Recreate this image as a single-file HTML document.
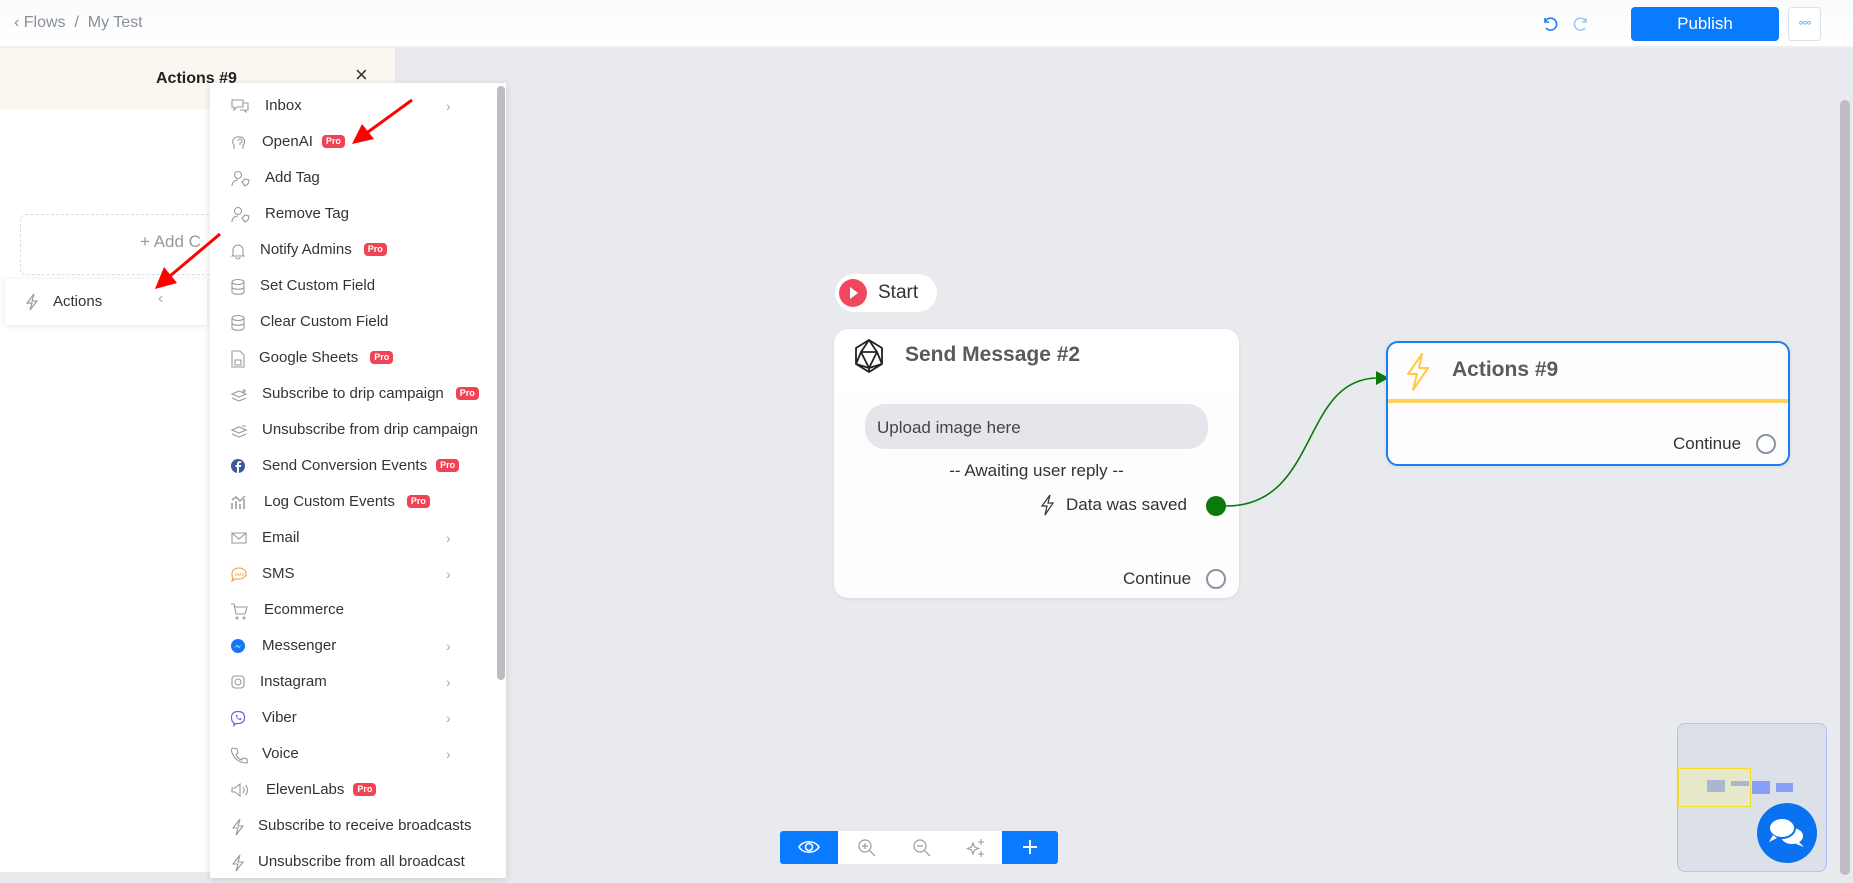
<!DOCTYPE html>
<html><head><meta charset="utf-8"><style>
*{box-sizing:border-box;margin:0;padding:0}
body{width:1853px;height:883px;overflow:hidden;background:#e9eaee;font-family:"Liberation Sans",Arial,sans-serif;position:relative;color:#333}
.abs{position:absolute}
.top{left:0;top:0;width:1853px;height:48px;background:linear-gradient(#fafbfc,#fff);border-bottom:2px solid #eceef2}
.crumb{left:14px;top:14px;font-size:16px;color:#8a8f99}
.pub{left:1631px;top:7px;width:148px;height:34px;background:#0a7bff;border-radius:4px;color:#fff;font-size:17px;text-align:center;line-height:34px}
.dots{left:1788px;top:7px;width:33px;height:34px;border:1px solid #dde0e6;border-radius:4px;background:#fff;color:#1a7ff0;text-align:center;line-height:28px;font-size:14px;letter-spacing:-1px}
.left{left:0;top:48px;width:395px;height:824px;background:#fff}
.lhead{left:0;top:48px;width:395px;height:62px;background:#faf6f0}
.menu{left:210px;top:83px;width:296px;height:795px;background:#fff;box-shadow:0 2px 8px rgba(0,0,0,.12)}
.item{position:absolute;left:0;width:296px;height:36px;font-size:15px;color:#333;line-height:36px}
.item svg{position:absolute;left:20px;top:10px}
.item span.t{position:absolute;left:52px}
.pro{display:inline-block;background:#f04455;color:#fff;font-size:9px;font-weight:bold;border-radius:4px;padding:0 4px;line-height:13px;height:13px;vertical-align:middle;margin-left:9px;position:relative;top:-1px}
.chev{position:absolute;left:236px;top:0;color:#aaa;font-size:14px}
.node{background:#fdfdfd;border-radius:14px;box-shadow:0 1px 4px rgba(0,0,0,.08)}
.circ{width:20px;height:20px;border:2px solid #8a94a6;border-radius:50%;background:#fff}
</style></head><body>
<div class="abs top"></div>
<div class="abs crumb">&#8249;&nbsp;Flows &nbsp;/&nbsp; My Test</div>
<svg class="abs" style="left:1540px;top:13px" width="20" height="20" viewBox="0 0 20 20"><path d="M5 5 L5 9 L9 9 M5 9 A6 6 0 1 1 6 15" fill="none" stroke="#1a7ff0" stroke-width="1.6"/></svg>
<svg class="abs" style="left:1571px;top:13px" width="20" height="20" viewBox="0 0 20 20"><path d="M15 5 L15 9 L11 9 M15 9 A6 6 0 1 0 14 15" fill="none" stroke="#9fc8f5" stroke-width="1.6"/></svg>
<div class="abs pub">Publish</div>
<div class="abs dots">&#9702;&#9702;&#9702;</div>

<div class="abs left"></div>
<div class="abs lhead"></div>
<div class="abs" style="left:156px;top:70px;font-size:16px;font-weight:bold;color:#222">Actions #9</div>
<div class="abs" style="left:355px;top:64px;font-size:22px;color:#333;line-height:22px">&#215;</div>
<div class="abs" style="left:20px;top:214px;width:200px;height:61px;border:1px dashed #cfe0f0;border-radius:6px"></div>
<div class="abs" style="left:140px;top:232px;font-size:17px;color:#999">+ Add C</div>
<div class="abs" style="left:5px;top:279px;width:202px;height:46px;background:#fff;box-shadow:0 1px 6px rgba(0,0,0,.1)"></div>
<svg class="abs" style="left:24px;top:293px" width="16" height="18" viewBox="0 0 16 18"><path d="M10 1 L3 10 L8 10 L6 17 L13 8 L8 8 Z" fill="none" stroke="#999" stroke-width="1.2"/></svg>
<div class="abs" style="left:53px;top:293px;font-size:15px;color:#333">Actions</div>
<div class="abs" style="left:158px;top:290px;font-size:16px;color:#aaa">&#8249;</div>

<div class="abs menu">
<div class="abs" style="left:287px;top:3px;width:8px;height:594px;background:#bdbdc2;border-radius:4px"></div>
</div>
<div class="abs" style="left:210px;top:88px;width:290px;height:790px">
<div class="item" style="top:0"><svg width="20" height="16"><path d="M2 2h11v7H7l-3 3V9H2z M13 5h5v7h-2v2l-2-2h-4" fill="none" stroke="#999" stroke-width="1.1"/></svg><span class="t" style="left:55px">Inbox</span><span class="chev">&#8250;</span></div>
<div class="item" style="top:36px"><svg width="18" height="18"><path d="M4 15V11C2 9 2 4 7 3s9 2 7 7l-1 1v4M8 7a2 2 0 1 1 2 2v2" fill="none" stroke="#999" stroke-width="1.1"/></svg><span class="t">OpenAI<span class="pro">Pro</span></span></div>
<div class="item" style="top:72px"><svg width="20" height="18"><circle cx="8" cy="5" r="3.5" fill="none" stroke="#999" stroke-width="1.1"/><path d="M2 16c0-4 3-6 6-6M12 12l3-3 4 1-1 4-3 2z" fill="none" stroke="#999" stroke-width="1.1"/></svg><span class="t" style="left:55px">Add Tag</span></div>
<div class="item" style="top:108px"><svg width="20" height="18"><circle cx="8" cy="5" r="3.5" fill="none" stroke="#999" stroke-width="1.1"/><path d="M2 16c0-4 3-6 6-6M12 12l3-3 4 1-1 4-3 2z" fill="none" stroke="#999" stroke-width="1.1"/></svg><span class="t" style="left:55px">Remove Tag</span></div>
<div class="item" style="top:144px"><svg width="16" height="18"><path d="M3 13V8a5 5 0 0 1 10 0v5l1 1H2z M6 15a2 2 0 0 0 4 0" fill="none" stroke="#999" stroke-width="1.1"/></svg><span class="t" style="left:50px">Notify Admins<span class="pro" style="margin-left:12px">Pro</span></span></div>
<div class="item" style="top:180px"><svg width="16" height="18"><ellipse cx="8" cy="4" rx="6" ry="2.5" fill="none" stroke="#999" stroke-width="1.1"/><path d="M2 4v10c0 3 12 3 12 0V4M2 9c0 3 12 3 12 0" fill="none" stroke="#999" stroke-width="1.1"/></svg><span class="t" style="left:50px">Set Custom Field</span></div>
<div class="item" style="top:216px"><svg width="16" height="18"><ellipse cx="8" cy="4" rx="6" ry="2.5" fill="none" stroke="#999" stroke-width="1.1"/><path d="M2 4v10c0 3 12 3 12 0V4M2 9c0 3 12 3 12 0" fill="none" stroke="#999" stroke-width="1.1"/></svg><span class="t" style="left:50px">Clear Custom Field</span></div>
<div class="item" style="top:252px"><svg width="16" height="18"><path d="M2 1h8l4 4v12H2z M5 10h6v5H5z" fill="none" stroke="#999" stroke-width="1.1"/></svg><span class="t" style="left:49px">Google Sheets<span class="pro" style="margin-left:12px">Pro</span></span></div>
<div class="item" style="top:288px"><svg width="18" height="18"><path d="M2 8l7-3 7 3-7 3z M2 12l7 3 7-3 M14 3v4M12 5h4" fill="none" stroke="#999" stroke-width="1.1"/></svg><span class="t">Subscribe to drip campaign<span class="pro" style="margin-left:12px">Pro</span></span></div>
<div class="item" style="top:324px"><svg width="18" height="18"><path d="M2 8l7-3 7 3-7 3z M2 12l7 3 7-3 M12 4h4" fill="none" stroke="#999" stroke-width="1.1"/></svg><span class="t">Unsubscribe from drip campaign</span></div>
<div class="item" style="top:360px"><svg width="16" height="16"><circle cx="8" cy="8" r="7" fill="#3b5998"/><path d="M9 15V9h2l.3-2H9V6c0-.6.2-1 1-1h1.3V3.2H9.5C8 3.2 7 4 7 5.6V7H5.5v2H7v6z" fill="#fff"/></svg><span class="t">Send Conversion Events<span class="pro">Pro</span></span></div>
<div class="item" style="top:396px"><svg width="18" height="16"><path d="M2 15V9M6 15V7M10 15V10M14 15V5M2 6l4-3 4 4 5-5" fill="none" stroke="#999" stroke-width="1.5"/></svg><span class="t" style="left:54px">Log Custom Events<span class="pro" style="margin-left:12px">Pro</span></span></div>
<div class="item" style="top:432px"><svg width="18" height="16"><path d="M2 3h14v10H2z M2 3l7 6 7-6" fill="none" stroke="#999" stroke-width="1.1"/></svg><span class="t">Email</span><span class="chev">&#8250;</span></div>
<div class="item" style="top:468px"><svg width="18" height="16"><path d="M9 2c4 0 7 2.5 7 5.5S13 13 9 13H5l-3 2 1-3C2 11 2 9 2 7.5 2 4.5 5 2 9 2z" fill="none" stroke="#f49a3a" stroke-width="1.1"/><text x="4.5" y="10" font-size="4.5" fill="#f49a3a" font-family="Liberation Sans">SMS</text></svg><span class="t">SMS</span><span class="chev">&#8250;</span></div>
<div class="item" style="top:504px"><svg width="18" height="18"><path d="M1 2h3l2 10h9l2-7H5M7 15a1 1 0 1 0 .1 0M14 15a1 1 0 1 0 .1 0" fill="none" stroke="#999" stroke-width="1.1"/></svg><span class="t" style="left:54px">Ecommerce</span></div>
<div class="item" style="top:540px"><svg width="16" height="16"><circle cx="8" cy="8" r="7" fill="#1877f2"/><path d="M4 10l3-3 2 2 3-3-3 4-2-2z" fill="#fff"/></svg><span class="t">Messenger</span><span class="chev">&#8250;</span></div>
<div class="item" style="top:576px"><svg width="16" height="16"><rect x="2" y="2" width="12" height="12" rx="3" fill="none" stroke="#999" stroke-width="1.1"/><circle cx="8" cy="8" r="3" fill="none" stroke="#999" stroke-width="1.1"/></svg><span class="t" style="left:50px">Instagram</span><span class="chev">&#8250;</span></div>
<div class="item" style="top:612px"><svg width="16" height="17"><path d="M8 1.5c4 0 6.5 2 6.5 6s-2.5 6-6.5 6H6l-2 2v-2.5C2 12 1.5 10 1.5 7.5 1.5 3.5 4 1.5 8 1.5z" fill="none" stroke="#7b5cd6" stroke-width="1.2"/><path d="M6 5c0 3 2 5 5 5l.5-1.5-1.5-.5-.8.8C8 8.5 7.5 8 7 7l.8-.8L7.3 5z" fill="#7b5cd6"/></svg><span class="t">Viber</span><span class="chev">&#8250;</span></div>
<div class="item" style="top:648px"><svg width="18" height="18"><path d="M3 2l4 1 1 4-2 1.5c1 2.5 3 4.5 5.5 5.5L13 12l4 1 .5 3.5C17 17 15 17 13 16.5 7 15 3 11 1.5 5 1.5 3 2 2 3 2z" fill="none" stroke="#999" stroke-width="1.1"/></svg><span class="t">Voice</span><span class="chev">&#8250;</span></div>
<div class="item" style="top:684px"><svg width="20" height="16"><path d="M2 6h3l5-4v12l-5-4H2z M13 5c1.5 1.5 1.5 4.5 0 6M15.5 3c2.5 2.5 2.5 7.5 0 10" fill="none" stroke="#999" stroke-width="1.1"/></svg><span class="t" style="left:56px">ElevenLabs<span class="pro">Pro</span></span></div>
<div class="item" style="top:720px"><svg width="16" height="18"><path d="M10 1 L3 10 L8 10 L6 17 L13 8 L8 8 Z" fill="none" stroke="#999" stroke-width="1.1"/></svg><span class="t" style="left:48px">Subscribe to receive broadcasts</span></div>
<div class="item" style="top:756px"><svg width="16" height="18"><path d="M10 1 L3 10 L8 10 L6 17 L13 8 L8 8 Z" fill="none" stroke="#999" stroke-width="1.1"/></svg><span class="t" style="left:48px">Unsubscribe from all broadcast</span></div>
</div>

<!-- red arrows -->
<svg class="abs" style="left:0;top:0" width="520" height="340"><g stroke="#f00" stroke-width="3" fill="#f00"><line x1="412" y1="100" x2="368" y2="132"/><polygon points="352,144 362,124 374,139" stroke="none"/><line x1="220" y1="234" x2="170" y2="276"/><polygon points="155,289 164,267 177,283" stroke="none"/></g></svg>

<!-- canvas -->
<div class="abs" style="left:1840px;top:100px;width:10px;height:775px;background:#bdbdc2;border-radius:5px"></div>
<div class="abs" style="left:835px;top:274px;width:102px;height:38px;background:#fff;border-radius:19px"></div>
<svg class="abs" style="left:839px;top:279px" width="28" height="28"><circle cx="14" cy="14" r="14" fill="#f2475d"/><path d="M11 8l8 6-8 6z" fill="#fff"/></svg>
<div class="abs" style="left:878px;top:282px;font-size:19px;color:#333">Start</div>

<div class="abs node" style="left:834px;top:329px;width:405px;height:269px"></div>
<div class="abs" style="left:834px;top:329px;width:405px;height:64px;background:#fff;border-radius:14px 14px 0 0"></div>
<svg class="abs" style="left:853px;top:338px" width="32" height="36" viewBox="0 0 32 36"><path d="M16 2L29 10V26L16 34L3 26V10Z M16 2L8 14H24Z M8 14L3 26M24 14L29 26M8 14L16 30L24 14M16 30L3 26M16 30L29 26M16 30V34" fill="none" stroke="#222" stroke-width="1.8" stroke-linejoin="round"/></svg>
<div class="abs" style="left:905px;top:343px;font-size:21px;font-weight:bold;color:#5a5a5a">Send Message #2</div>
<div class="abs" style="left:865px;top:404px;width:343px;height:45px;background:#e4e6eb;border-radius:20px"></div>
<div class="abs" style="left:877px;top:418px;font-size:17px;color:#444">Upload image here</div>
<div class="abs" style="left:834px;top:461px;width:405px;text-align:center;font-size:17px;color:#333">-- Awaiting user reply --</div>
<svg class="abs" style="left:1039px;top:494px" width="16" height="22"><path d="M11 1L3 12H8L6 21L14 9H9Z" fill="none" stroke="#333" stroke-width="1.2"/></svg>
<div class="abs" style="left:1066px;top:495px;font-size:17px;color:#333">Data was saved</div>
<div class="abs" style="left:1206px;top:496px;width:20px;height:20px;border-radius:50%;background:#0a7a0a"></div>
<div class="abs" style="left:1123px;top:569px;font-size:17px;color:#333">Continue</div>
<div class="abs circ" style="left:1206px;top:569px"></div>

<svg class="abs" style="left:0;top:0;pointer-events:none" width="1853" height="883"><path d="M1226 506 C1320 506 1300 378 1378 378" fill="none" stroke="#0a7a0a" stroke-width="1.6"/><polygon points="1389,378 1376,371 1376,385" fill="#0a7a0a"/></svg>

<div class="abs node" style="left:1386px;top:341px;width:404px;height:125px;border:2px solid #1a7ff0;border-radius:12px"></div>
<div class="abs" style="left:1388px;top:399px;width:400px;height:4px;background:#ffd15c"></div>
<svg class="abs" style="left:1404px;top:352px" width="28" height="40" viewBox="0 0 28 40"><path d="M18 2L4 22H13L9 38L24 16H15Z" fill="none" stroke="#ffc940" stroke-width="2" stroke-linejoin="round"/></svg>
<div class="abs" style="left:1452px;top:358px;font-size:21px;font-weight:bold;color:#5a5a5a">Actions #9</div>
<div class="abs" style="left:1673px;top:434px;font-size:17px;color:#333">Continue</div>
<div class="abs circ" style="left:1756px;top:434px"></div>

<!-- toolbar -->
<div class="abs" style="left:780px;top:831px;width:278px;height:33px;background:#fff;border-radius:3px"></div>
<div class="abs" style="left:780px;top:831px;width:58px;height:33px;background:#0a7bff;border-radius:3px 0 0 3px"></div>
<div class="abs" style="left:1002px;top:831px;width:56px;height:33px;background:#0a7bff;border-radius:0 3px 3px 0"></div>
<svg class="abs" style="left:798px;top:838px" width="22" height="18"><path d="M1 9C5 2 17 2 21 9 17 16 5 16 1 9z" fill="none" stroke="#fff" stroke-width="1.6"/><circle cx="11" cy="9" r="3.5" fill="none" stroke="#fff" stroke-width="1.6"/></svg>
<svg class="abs" style="left:857px;top:838px" width="20" height="20"><circle cx="8" cy="8" r="6" fill="none" stroke="#999" stroke-width="1.2"/><path d="M12.5 12.5L18 18M5 8h6M8 5v6" stroke="#999" stroke-width="1.2"/></svg>
<svg class="abs" style="left:912px;top:838px" width="20" height="20"><circle cx="8" cy="8" r="6" fill="none" stroke="#999" stroke-width="1.2"/><path d="M12.5 12.5L18 18M5 8h6" stroke="#999" stroke-width="1.2"/></svg>
<svg class="abs" style="left:966px;top:838px" width="20" height="20"><path d="M7 5l1.5 4 4 1.5-4 1.5L7 16l-1.5-4-4-1.5 4-1.5z M15 1v6M12 4h6M15 13v6M12 16h6" fill="none" stroke="#999" stroke-width="1.1"/></svg>
<svg class="abs" style="left:1021px;top:838px" width="18" height="18"><path d="M9 2v14M2 9h14" stroke="#fff" stroke-width="2"/></svg>

<!-- minimap -->
<div class="abs" style="left:1677px;top:723px;width:150px;height:149px;background:#dce0e8;border:1px solid #b7c0fb;border-radius:8px"></div>
<div class="abs" style="left:1678px;top:768px;width:73px;height:39px;background:#e6e8c9;border:1px solid #f5dc2a"></div>
<div class="abs" style="left:1707px;top:780px;width:18px;height:12px;background:#aab7d3"></div>
<div class="abs" style="left:1731px;top:781px;width:18px;height:5px;background:#aab7d3"></div>
<div class="abs" style="left:1752px;top:781px;width:18px;height:13px;background:#8aa0f7"></div>
<div class="abs" style="left:1776px;top:783px;width:17px;height:9px;background:#8aa0f7"></div>
<div class="abs" style="left:1757px;top:803px;width:60px;height:60px;border-radius:50%;background:#0a72f0"></div>
<svg class="abs" style="left:1765px;top:815px" width="44" height="36" viewBox="0 0 44 36"><ellipse cx="27" cy="21" rx="12" ry="9" fill="#fff" stroke="#0a72f0" stroke-width="2"/><path d="M34 27l5 5-8-3z" fill="#fff"/><ellipse cx="17" cy="13" rx="13" ry="10" fill="#fff" stroke="#0a72f0" stroke-width="2"/><path d="M8 20l-4 7 8-4z" fill="#fff"/></svg>
</body></html>
